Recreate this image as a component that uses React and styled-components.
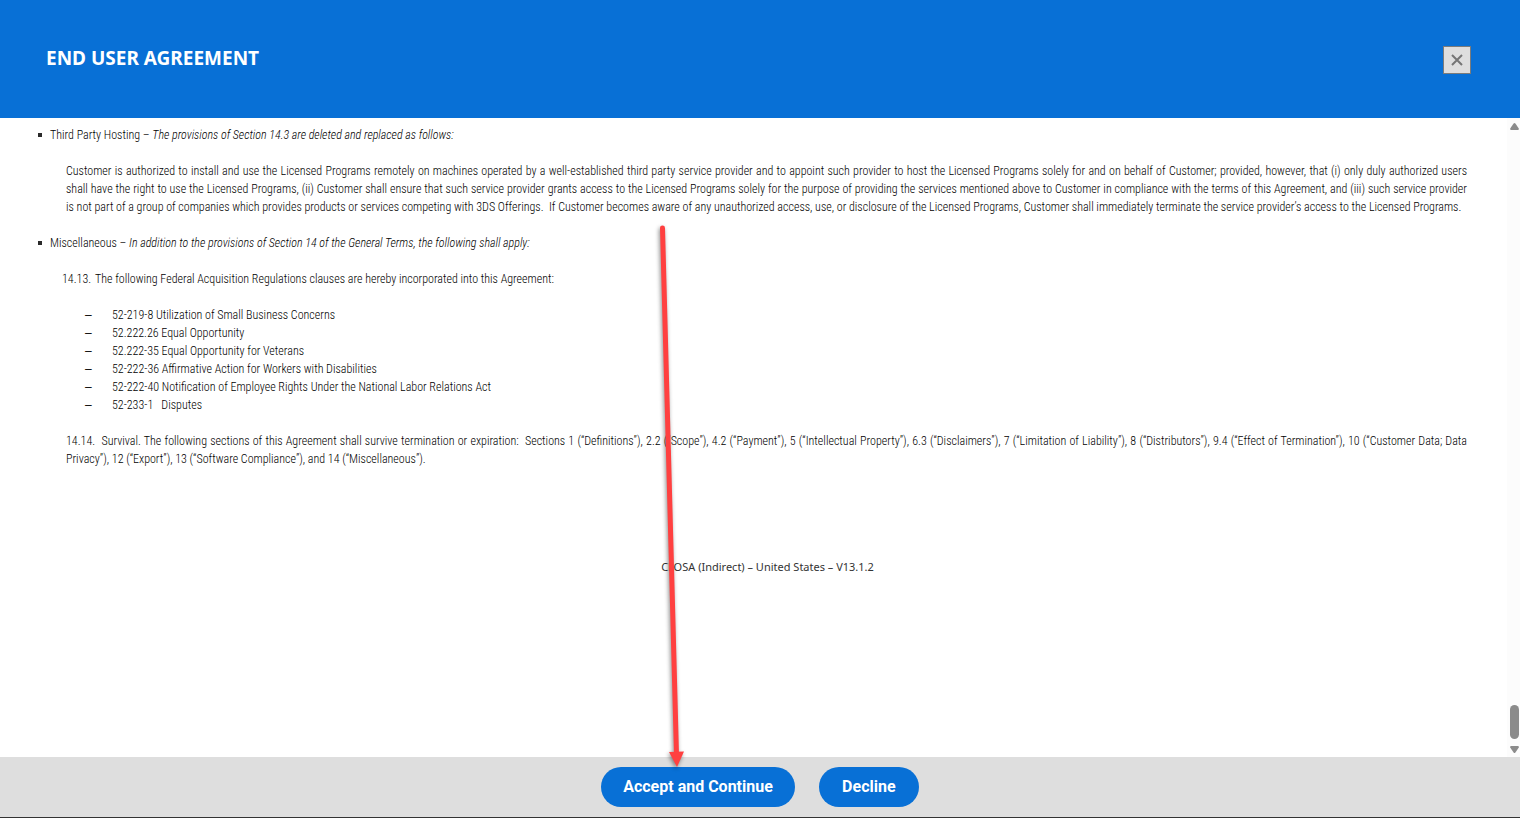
import React from "react";
import styled, { createGlobalStyle } from "styled-components";

const GlobalStyle = createGlobalStyle`
  *, *::before, *::after { box-sizing: border-box; }
  body { margin: 0; background: #fff; color: #000; }
  p, h1, ul { margin: 0; padding: 0; }
  ul { list-style: none; }
`;

const Page = styled.div`
  position: relative;
  display: flex;
  flex-direction: column;
  min-height: 100vh;
  overflow: hidden;
`;

const Header = styled.header`
  display: flex;
  align-items: flex-start;
  justify-content: space-between;
  padding: 46px 49px 44px 46px;
  background: #0870d6;
`;

const Title = styled.h1`
  font: bold 19px/24px "Noto Sans", "Open Sans", sans-serif;
  color: #fff;
`;

const CloseButton = styled.button`
  display: flex;
  align-items: center;
  justify-content: center;
  width: 28px;
  height: 28px;
  padding: 0;
  border: 1px solid #7b7b7b;
  background: #dedede;
`;

const Body = styled.div`
  display: flex;
  flex: 1;
`;

const Agreement = styled.main`
  flex: 1;
  min-width: 0;
  display: flex;
  flex-direction: column;
  gap: 18px;
  padding: 8px 40px 40px 38px;
  font: 300 12px/18px "Roboto Condensed", "Liberation Sans", sans-serif;
`;

const Heading = styled.p`
  display: flex;
  align-items: center;
  gap: 8px;

  &::before {
    content: "";
    width: 4px;
    height: 4px;
    background: #2b2b2b;
  }
`;

const Paragraph = styled.p`
  padding-left: ${(p) => p.$indent}px;
`;

const Line = styled.span`
  display: block;
  text-align: justify;
  text-align-last: ${(p) => (p.$last ? "left" : "justify")};
`;

const ClauseNumber = styled.span`
  display: inline-block;
  width: 33px;
`;

const ClauseList = styled.ul`
  padding-left: 47px;
`;

const Clause = styled.li`
  display: flex;

  &::before {
    content: "–";
    width: 27px;
    font-family: "Liberation Sans", sans-serif;
  }
`;

const Version = styled.p`
  padding: 72px 0 0 30px;
  text-align: center;
  color: #333;
  font: 11px/18px "Noto Sans", "Open Sans", sans-serif;
`;

const ScrollTrack = styled.div`
  display: flex;
  flex-direction: column;
  align-items: flex-end;
  width: 13px;
  padding: 5px 1px 4px 0;
  background: #fcfcfc;
`;

const ScrollThumb = styled.div`
  width: 9px;
  height: 34px;
  margin: auto 0 7px;
  border-radius: 5px;
  background: #8b8b8b;
`;

const Footer = styled.footer`
  display: flex;
  justify-content: center;
  gap: 24px;
  padding: 10px 0;
  border-bottom: 1px solid #333;
  background: #dedede;
`;

const PillButton = styled.button`
  min-width: 100px;
  height: 40px;
  padding: 0 22px;
  border: 0;
  border-radius: 20px;
  background: #0870d6;
  color: #fff;
  font: bold 16px/20px Roboto, "Noto Sans", sans-serif;
`;

const Pointer = styled.svg`
  position: absolute;
  top: 215px;
  left: calc(50% - 110px);
  pointer-events: none;
  filter: drop-shadow(-1px 2px 2px rgba(0, 0, 0, 0.45));
`;

const clauses = [
  "52-219-8 Utilization of Small Business Concerns",
  "52.222.26 Equal Opportunity",
  "52.222-35 Equal Opportunity for Veterans",
  "52-222-36 Affirmative Action for Workers with Disabilities",
  "52-222-40 Notification of Employee Rights Under the National Labor Relations Act",
  "52-233-1\u00a0\u00a0 Disputes",
];

const hosting = [
  "Customer is authorized to install and use the Licensed Programs remotely on machines operated by a well-established third party service provider and to appoint such provider to host the Licensed Programs solely for and on behalf of Customer; provided, however, that (i) only duly authorized users",
  "shall have the right to use the Licensed Programs, (ii) Customer shall ensure that such service provider grants access to the Licensed Programs solely for the purpose of providing the services mentioned above to Customer in compliance with the terms of this Agreement, and (iii) such service provider",
  "is not part of a group of companies which provides products or services competing with 3DS Offerings.\u00a0 If Customer becomes aware of any unauthorized access, use, or disclosure of the Licensed Programs, Customer shall immediately terminate the service provider’s access to the Licensed Programs.",
];

const survival = [
  "14.14.\u00a0 Survival. The following sections of this Agreement shall survive termination or expiration:\u00a0 Sections 1 (“Definitions”), 2.2 (“Scope”), 4.2 (“Payment”), 5 (“Intellectual Property”), 6.3 (“Disclaimers”), 7 (“Limitation of Liability”), 8 (“Distributors”), 9.4 (“Effect of Termination”), 10 (“Customer Data; Data",
  "Privacy”), 12 (“Export”), 13 (“Software Compliance”), and 14 (“Miscellaneous”).",
];

function Lines({ lines }) {
  return lines.map((text, i) => (
    <Line key={i} $last={i === lines.length - 1}>
      {text}
    </Line>
  ));
}

export default function App() {
  return (
    <Page>
      <GlobalStyle />
      <Header>
        <Title>END USER AGREEMENT</Title>
        <CloseButton type="button" aria-label="Close">
          <svg width="12" height="12" viewBox="0 0 12 12" fill="none" stroke="#757575" strokeWidth="2">
            <path d="M1 1L11 11M11 1L1 11" />
          </svg>
        </CloseButton>
      </Header>
      <Body>
        <Agreement>
          <Heading>
            <span>
              Third Party Hosting – <em>The provisions of Section 14.3 are deleted and replaced as follows:</em>
            </span>
          </Heading>
          <Paragraph $indent={28}>
            <Lines lines={hosting} />
          </Paragraph>
          <Heading>
            <span>
              Miscellaneous – <em>In addition to the provisions of Section 14 of the General Terms, the following shall apply:</em>
            </span>
          </Heading>
          <Paragraph $indent={24}>
            <ClauseNumber>14.13.</ClauseNumber>
            The following Federal Acquisition Regulations clauses are hereby incorporated into this Agreement:
          </Paragraph>
          <ClauseList>
            {clauses.map((c) => (
              <Clause key={c}>{c}</Clause>
            ))}
          </ClauseList>
          <Paragraph $indent={28}>
            <Lines lines={survival} />
          </Paragraph>
          <Version>CLOSA (Indirect) – United States – V13.1.2</Version>
        </Agreement>
        <ScrollTrack aria-hidden="true">
          <svg width="9" height="7" viewBox="0 0 9 7" fill="#8b8b8b">
            <path d="M3.6 0.6Q4.5 -0.5 5.4 0.6L8.8 5.6Q9 7 8 7H1Q0 7 0.2 5.6Z" />
          </svg>
          <ScrollThumb />
          <svg width="9" height="7" viewBox="0 0 9 7" fill="#8b8b8b">
            <path d="M3.6 6.4Q4.5 7.5 5.4 6.4L8.8 1.4Q9 0 8 0H1Q0 0 0.2 1.4Z" />
          </svg>
        </ScrollTrack>
      </Body>
      <Footer>
        <PillButton type="button">Accept and Continue</PillButton>
        <PillButton type="button">Decline</PillButton>
      </Footer>
      <Pointer width="45" height="560" viewBox="650 215 45 560" aria-hidden="true">
        <path d="M662.5 228L676.5 755" stroke="#ff4040" strokeWidth="5" strokeLinecap="round" />
        <path d="M669 752L684 751.5L677 767Z" fill="#ff4040" />
      </Pointer>
    </Page>
  );
}
